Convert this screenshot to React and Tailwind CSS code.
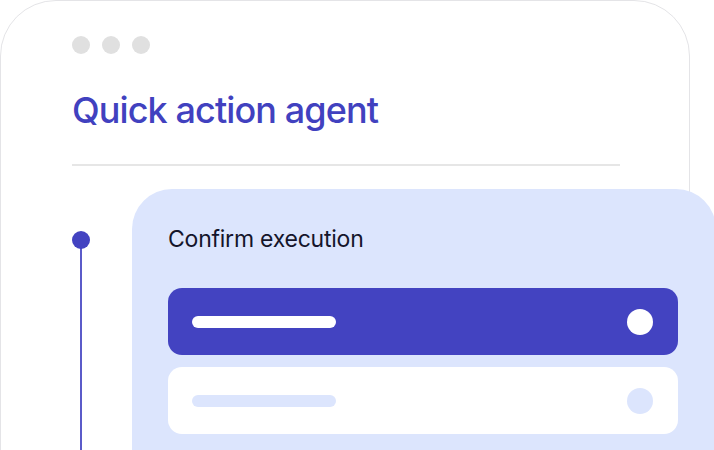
import React from 'react';

function OptionRow({ active }) {
  return (
    <div
      className={
        active
          ? 'flex h-[67px] items-center justify-between rounded-[14px] bg-[#4343c1] pl-6 pr-[25px]'
          : 'flex h-[67px] items-center justify-between rounded-[14px] bg-white pl-6 pr-[25px]'
      }
    >
      <div className={active ? 'h-3 w-[144px] rounded-full bg-white' : 'h-3 w-[144px] rounded-full bg-[#dce5fd]'} />
      <div className={active ? 'h-[26px] w-[26px] rounded-full bg-white' : 'h-[26px] w-[26px] rounded-full bg-[#dce5fd]'} />
    </div>
  );
}

export default function App() {
  return (
    <div className="h-[450px] w-[714px] overflow-hidden bg-white font-['Inter',sans-serif]">
      {/* Window card */}
      <div className="h-[520px] w-[690px] rounded-[56px] border border-[#e4e4e7] pl-[71px] pt-[35px]">
        {/* Traffic dots */}
        <div className="flex gap-3">
          <div className="h-[18px] w-[18px] rounded-full bg-[#e0e0e0]" />
          <div className="h-[18px] w-[18px] rounded-full bg-[#e0e0e0]" />
          <div className="h-[18px] w-[18px] rounded-full bg-[#e0e0e0]" />
        </div>

        <h1 className="mt-[36px] text-[36px] font-medium leading-[40px] tracking-[-0.025em] text-[#4141bf]">
          Quick action agent
        </h1>

        <div className="mt-[34px] h-[2px] w-[548px] bg-[#e6e6e6]" />

        {/* Timeline + confirm panel */}
        <div className="mt-[23px] flex">
          <div className="relative w-[18px]">
            <div className="absolute left-[8px] top-[48px] h-[300px] w-[2px] bg-[#5b5bc9]" />
            <div className="relative mt-[42px] h-[18px] w-[18px] rounded-full bg-[#4343c1]" />
          </div>

          <div className="ml-[42px] h-[300px] w-[584px] shrink-0 rounded-[40px] bg-[#dce5fd] pl-[36px] pr-[38px] pt-[36px]">
            <p className="text-[23px] leading-[28px] tracking-[-0.01em] text-[#15152b]">Confirm execution</p>
            <div className="mt-[35px] flex flex-col gap-[12px]">
              <OptionRow active />
              <OptionRow />
            </div>
          </div>
        </div>
      </div>
    </div>
  );
}
